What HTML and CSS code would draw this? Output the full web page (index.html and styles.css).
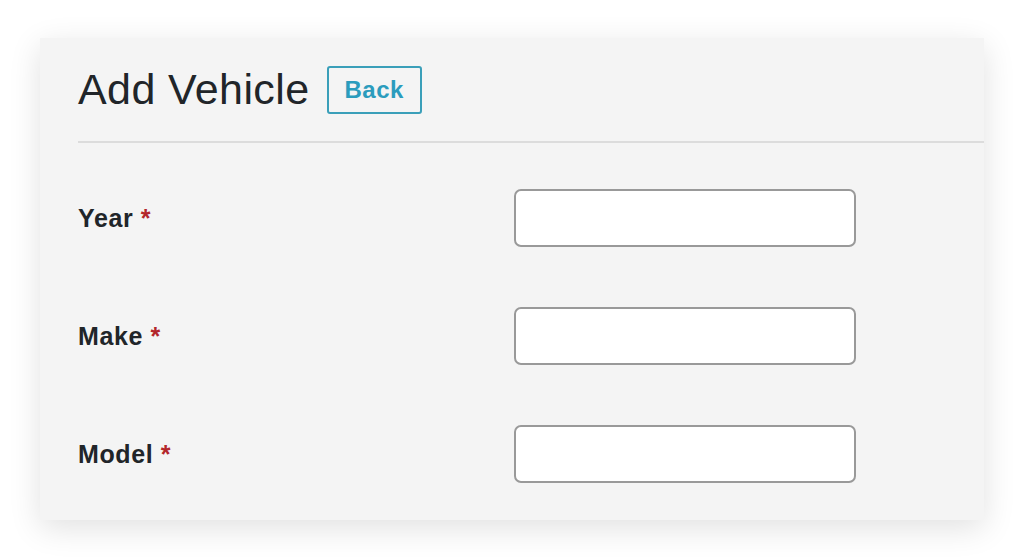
FILE: index.html
```html
<!DOCTYPE html>
<html lang="en">
<head>
    <meta charset="UTF-8">
    <meta name="viewport" content="width=device-width, initial-scale=1.0">
    <title>Add Vehicle</title>
    <link rel="stylesheet" href="styles.css">
</head>
<body>

    <div class="card">
        <div class="card-header">
            <h1>Add Vehicle</h1>
            <button type="button" class="btn-back">Back</button>
        </div>

        <form class="vehicle-form">
            <div class="form-row">
                <label for="year">Year <span class="required">*</span></label>
                <input type="text" id="year">
            </div>
            <div class="form-row">
                <label for="make">Make <span class="required">*</span></label>
                <input type="text" id="make">
            </div>
            <div class="form-row">
                <label for="model">Model <span class="required">*</span></label>
                <input type="text" id="model">
            </div>
        </form>
    </div>

</body>
</html>
```

FILE: styles.css
```css
/* Page and card */
body {
    background-color: #ffffff;
    color: #212529;
    font-family: 'Liberation Sans', Arial, sans-serif;
    margin: 0;
    padding: 38px 40px 40px 40px;
}

.card {
    background-color: #f4f4f4;
    padding: 0 0 37px 38px;
    box-shadow: 0 8px 30px rgba(0, 0, 0, 0.12);
}

.card-header {
    display: flex;
    align-items: center;
    gap: 17px;
    height: 103px;
    border-bottom: 2px solid #dcdcdc;
}

.card-header h1 {
    margin: 0;
    font-size: 43px;
    font-weight: normal;
    letter-spacing: 0.4px;
    color: #212529;
}

.btn-back {
    height: 48px;
    padding: 0 16px;
    background-color: transparent;
    border: 2px solid #3a9fb9;
    border-radius: 3px;
    color: #2b9cbd;
    font-family: inherit;
    font-size: 24px;
    font-weight: bold;
    letter-spacing: 0.5px;
    cursor: pointer;
}

.vehicle-form {
    padding-top: 46px;
    display: flex;
    flex-direction: column;
    gap: 60px;
}

.form-row {
    display: grid;
    grid-template-columns: 436px 342px;
    align-items: center;
}

.form-row label {
    font-size: 25px;
    font-weight: bold;
    letter-spacing: 0.6px;
    color: #212529;
}

.required {
    color: #b3262b;
}

.form-row input {
    box-sizing: border-box;
    height: 58px;
    width: 342px;
    background-color: #ffffff;
    border: 2px solid #999999;
    border-radius: 7px;
    outline: none;
}
```
